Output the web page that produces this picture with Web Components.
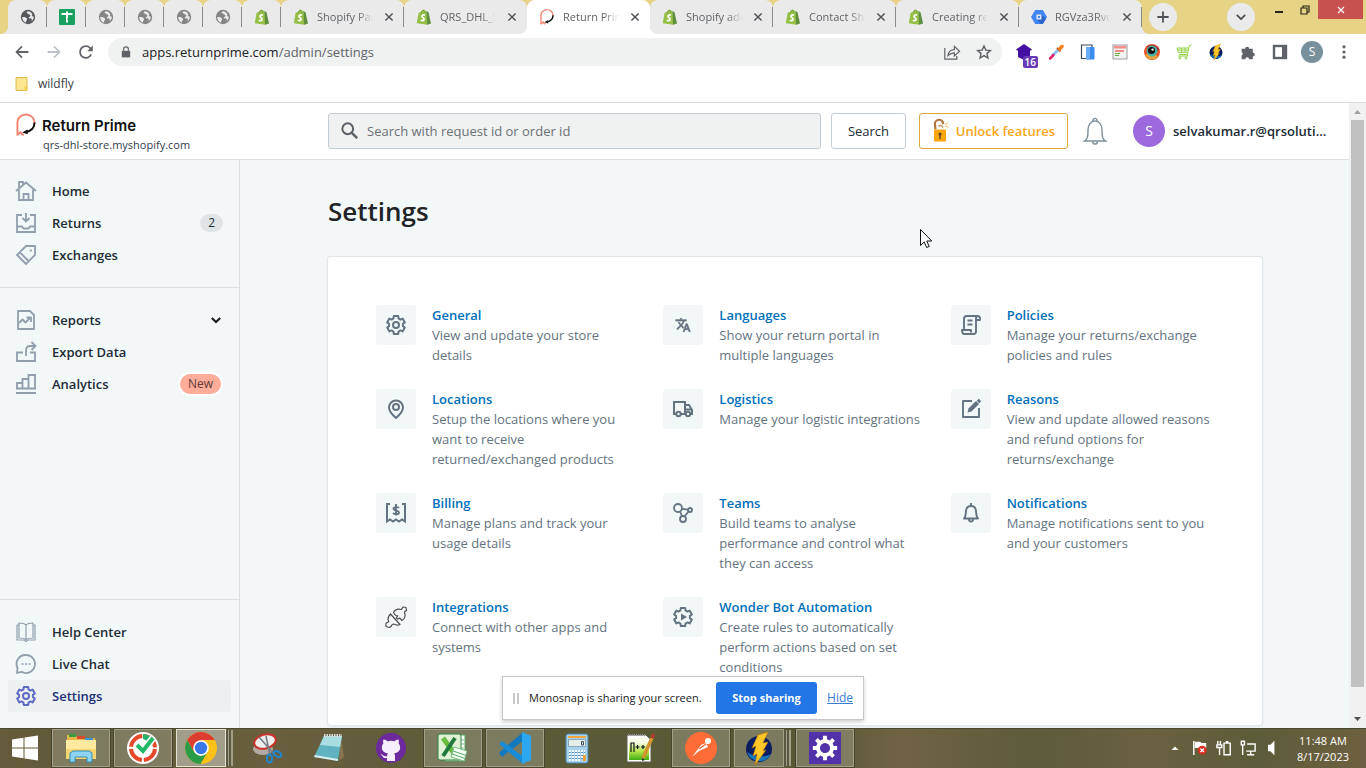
<!DOCTYPE html>
<html lang="en">
<head>
<meta charset="utf-8">
<title>Return Prime</title>
<style>
  html, body { height: 100%; }
  body {
    margin: 0;
    overflow: hidden;
    font: 13px/20px "Open Sans", "Noto Sans", sans-serif;
    color: #212b36;
  }
</style>
</head>
<body>
<desktop-shell>
  <tab-strip slot="browser">
    <browser-tab icon="globe-dark" pinned sep></browser-tab>
    <browser-tab icon="sheets" pinned sep></browser-tab>
    <browser-tab icon="globe" pinned sep></browser-tab>
    <browser-tab icon="globe" pinned sep></browser-tab>
    <browser-tab icon="globe" pinned sep></browser-tab>
    <browser-tab icon="globe" pinned sep></browser-tab>
    <browser-tab icon="shopify" pinned sep></browser-tab>
    <browser-tab icon="shopify" sep>Shopify Partners</browser-tab>
    <browser-tab icon="shopify">QRS_DHL_Store</browser-tab>
    <browser-tab icon="prime" active>Return Prime</browser-tab>
    <browser-tab icon="shopify" sep>Shopify admin</browser-tab>
    <browser-tab icon="shopify" sep>Contact Shopify</browser-tab>
    <browser-tab icon="shopify" sep>Creating returns</browser-tab>
    <browser-tab icon="gcloud" sep>RGVza3RvcA</browser-tab>
  </tab-strip>
  <address-bar slot="browser"></address-bar>
  <bookmark-bar slot="browser"></bookmark-bar>

  <app-header slot="header"></app-header>

  <side-nav slot="nav">
    <nav-item icon="home">Home</nav-item>
    <nav-item icon="returns">Returns<count-badge slot="end">2</count-badge></nav-item>
    <nav-item icon="tag">Exchanges</nav-item>
    <nav-item slot="middle" icon="report">Reports<svg-icon slot="end" name="chevron"></svg-icon></nav-item>
    <nav-item slot="middle" icon="export">Export Data</nav-item>
    <nav-item slot="middle" icon="bars">Analytics<count-badge slot="end" kind="new">New</count-badge></nav-item>
    <nav-item slot="bottom" icon="book">Help Center</nav-item>
    <nav-item slot="bottom" icon="chat">Live Chat</nav-item>
    <nav-item slot="bottom" icon="gear" selected>Settings</nav-item>
  </side-nav>

  <settings-page heading="Settings">
    <setting-item icon="gear" heading="General">View and update your store details</setting-item>
    <setting-item icon="translate" heading="Languages">Show your return portal in multiple languages</setting-item>
    <setting-item icon="scroll" heading="Policies">Manage your returns/exchange policies and rules</setting-item>
    <setting-item icon="pin" heading="Locations">Setup the locations where you want to receive returned/exchanged products</setting-item>
    <setting-item icon="truck" heading="Logistics">Manage your logistic integrations</setting-item>
    <setting-item icon="edit" heading="Reasons">View and update allowed reasons and refund options for returns/exchange</setting-item>
    <setting-item icon="bill" heading="Billing">Manage plans and track your usage details</setting-item>
    <setting-item icon="nodes" heading="Teams">Build teams to analyse performance and control what they can access</setting-item>
    <setting-item icon="bell" heading="Notifications">Manage notifications sent to you and your customers</setting-item>
    <setting-item icon="plug" heading="Integrations">Connect with other apps and systems</setting-item>
    <setting-item icon="gear-play" heading="Wonder Bot Automation">Create rules to automatically perform actions based on set conditions</setting-item>
  </settings-page>

  <share-bar slot="overlay"></share-bar>
  <mouse-pointer slot="overlay"></mouse-pointer>

  <task-bar slot="taskbar">
    <task-button icon="explorer" label="File Explorer" open></task-button>
    <task-button icon="timer" label="Time tracker" open></task-button>
    <task-button icon="chrome" label="Chrome" open stacked current></task-button>
    <task-button icon="snip" label="Snipping Tool"></task-button>
    <task-button icon="notepad" label="Notepad"></task-button>
    <task-button icon="github" label="GitHub"></task-button>
    <task-button icon="excel" label="Excel" open></task-button>
    <task-button icon="vscode" label="VS Code" open></task-button>
    <task-button icon="calc" label="Calculator"></task-button>
    <task-button icon="npp" label="Notepad++"></task-button>
    <task-button icon="postman" label="Postman" open></task-button>
    <task-button icon="bolt" label="Monosnap" open stacked></task-button>
    <task-button icon="settings-app" label="Settings" open></task-button>
  </task-bar>
</desktop-shell>

<script>
// Outline of a toothed cog centred in a 20x20 box
function cog(teeth, outer, inner, spread = 14, root = 21) {
  const pt = (deg, r) => {
    const a = (deg - 90) * Math.PI / 180;
    return (10 + r * Math.cos(a)).toFixed(2) + ' ' + (10 + r * Math.sin(a)).toFixed(2);
  };
  const pts = [];
  for (let i = 0; i < teeth; i++) {
    const c = i * 360 / teeth;
    pts.push(pt(c - root, inner), pt(c - spread, outer), pt(c + spread, outer), pt(c + root, inner));
  }
  return 'M' + pts.join('L') + 'Z';
}

const line = (body, w = 2, box = '0 0 20 20') =>
  `<svg viewBox="${box}" fill="none" stroke="currentColor" stroke-width="${w}" stroke-linejoin="round">${body}</svg>`;
const fill = (body, box = '0 0 20 20') => `<svg viewBox="${box}" fill="currentColor">${body}</svg>`;

const globe = color => `<svg viewBox="0 0 16 16"><circle cx="8" cy="8" r="7.2" fill="${color}"/>
  <path fill="#eaeaea" d="M2.2 8.3c1.8-.6 3.6.1 4.6 1.2.6.8.2 1.7-.6 2.4l-.5 1.9C3.5 12.8 2.2 10.8 2.2 8.3zM8 2.2c-2 .6-1.6 2.4.2 2.4.2 1.6 2.2.6 2.2 2.2 0 1.2-1.6 1-1.6 2.2 0 .8 1.4.4 2.6.8.8.3.6 1.6-.4 2.8 2-1.2 2.8-3 2.8-4.8l-2-.8.6-1.6C11.4 3.4 9.8 2.2 8 2.2z"/></svg>`;

const primeMark = `<path fill="none" stroke="#f4836f" stroke-width="2" d="M1.5 23V9.5C1.5 4.5 5.5 1 10.5 1s9 3.7 9 9"/>
  <path fill="none" stroke="#f4836f" stroke-width="2" d="M1.5 22.5l3.2-3 1.8 2.6 2-.2"/>
  <path fill="none" stroke="#111" stroke-width="2.2" d="M19.5 9.5c0 5.4-3.8 9.2-9.5 10"/>
  <path fill="#111" d="M12 16.8l-5.5 3 5.9 1.9z"/>`;

const bolt = `<circle cx="16" cy="17" r="13" fill="#0a1d62"/><path d="M4 20a13 13 0 0 0 24 2c-7 4-17 3-24-2z" fill="#1674b8"/>
  <path d="M15 3L25 0l-5 11 5-1-5 9 3-1-11 15 2-11-4 2 3-10-4 2z" fill="#ffc629" stroke="#b87a08" stroke-width=".6"/>`;

const ICONS = {
  'globe': globe('#858585'),
  'globe-dark': globe('#555a5e'),
  'sheets': `<svg viewBox="0 0 16 16"><rect width="16" height="16" rx="1" fill="#18a15f"/><path d="M2.5 5h11M8 2.5v11" stroke="#fff" stroke-width="2"/><path d="M8 10h5.5" stroke="#18a15f"/></svg>`,
  'shopify': `<svg viewBox="0 0 16 16"><path fill="#95bf47" d="M2.6 3.8L5 3.1C5.5 1.2 6.7.3 8 .4l1 1.3 1.5.3 1.2 13.8L.8 14.3z"/><path fill="#5e8e3e" d="M10.5 2l2 1.3L15 14.6l-3.9 1.2z"/>
    <path fill="none" stroke="#6f9a3a" stroke-width=".8" d="M5.2 4.2C5.5 2 6.8 1 7.8 1.3s1 1.3 1 2.2"/>
    <path fill="none" stroke="#fff" stroke-width="1.7" d="M9 6.3C7.5 5.4 5.8 6 6 7.4c.1 1.2 2.2 1.3 2.1 2.9-.1 1.5-1.9 1.8-3.3.8"/></svg>`,
  'prime': `<svg viewBox="0 0 21 24">${primeMark}</svg>`,
  'gcloud': `<svg viewBox="0 0 16 16"><path fill="#4285f4" d="M4.2 1h7.6L16 8l-4.2 7H4.2L0 8z"/><path fill="#2a66c8" d="M10.5 5.5L15 9.8 12 14.6 9.8 15l-4.3-4.5z"/><path fill="#dce8ff" d="M5.5 5.5h5v5h-5z"/><path fill="#4285f4" d="M7 7h2v2H7z"/></svg>`,
  'close': line('<path d="M4 4l12 12M16 4L4 16"/>', 2.4),
  'plus': line('<path d="M10 2v16M2 10h16"/>', 2.6),
  'caret': line('<path d="M4 7l6 6 6-6"/>', 2.6),
  'back': line('<path d="M18 10H3M10 3l-7 7 7 7"/>', 2.2),
  'forward': line('<path d="M2 10h15M10 3l7 7-7 7"/>', 2.2),
  'reload': line('<path d="M16.5 13A7.3 7.3 0 1 1 15 4.8l2 2.2"/><path fill="currentColor" stroke="none" d="M18.5 2v7h-7z"/>', 2.2),
  'lock': fill('<path d="M3 8h14v11H3z"/><path fill="none" stroke="currentColor" stroke-width="2" d="M6 8V5.5a4 4 0 0 1 8 0V8"/>'),
  'share': line('<path stroke-linejoin="miter" d="M1 5v14h15v-4M5 14.5C5.5 10 8.5 7 13 7V3l6.5 6L13 15v-4c-3 0-5.5.8-8 3.5z"/>', 1.5),
  'star': line('<path stroke-linejoin="miter" d="M10 2.5l2.3 5.2 5.6.5-4.2 3.8 1.2 5.5L10 14.6l-4.9 2.9 1.2-5.5-4.2-3.8 5.6-.5z"/>', 1.8),
  'cap': `<svg viewBox="0 0 16 16"><path fill="#4511a5" d="M8 0l8 5.5-2 1.5v6l-6 3-6-3V7L0 5.5z"/></svg>`,
  'dropper': `<svg viewBox="0 0 16 16"><path d="M4 12l6-6" stroke="#8ac4f5" stroke-width="3"/><path d="M2 14.5l3.5-3.5" stroke="#e0246e" stroke-width="2.5" stroke-linecap="round"/><path d="M9 4l3.5 3.5" stroke="#b34a13" stroke-width="1.8"/><path d="M11.5 5L14 2.5" stroke="#f58220" stroke-width="3.6" stroke-linecap="round"/></svg>`,
  'devices': `<svg viewBox="0 0 16 16"><path d="M6 14.5H1.5V1H12v2" fill="none" stroke="#3c4a5c" stroke-width="1.2"/><rect x="6" y="3" width="8.5" height="12.5" rx="1" fill="#3b8cf0"/><rect x="6" y="3" width="4" height="12.5" fill="#68adff"/></svg>`,
  'reader': `<svg viewBox="0 0 16 16"><rect x="1" y="1" width="14" height="14" fill="#f3f3f3" stroke="#9b9b9b"/><path fill="#f4908a" d="M2 2h12v2.5H2z"/><path stroke="#ef6a62" stroke-width="1.5" d="M3 7h9"/><path stroke="#63a83c" d="M3 9.5h5M3 11.5h4"/></svg>`,
  'eye': `<svg viewBox="0 0 16 16"><circle cx="8" cy="8" r="8" fill="#e9552c"/><path d="M2.5 3A8 8 0 0 1 15.5 6l-7 2z" fill="#a13939"/><path d="M1 11a8 8 0 0 0 13 2l-5-5z" fill="#e8a43c"/><circle cx="8" cy="7" r="5.4" fill="#49b4ac"/><circle cx="7.5" cy="6.5" r="3.6" fill="#141414"/><circle cx="8.6" cy="5.6" r="1.2" fill="#eee"/></svg>`,
  'cart': `<svg viewBox="0 0 16 16" fill="none" stroke="#8ed043"><path d="M15.5 1L13.5 1.5l-2.3 9H3M1 4l1.5 4.5 9-.3M1 4h11.5M1.5 6h10.5M5 4l.8 4.5M9 4v4.5M11 10.5l1 1.5H2"/><circle cx="4" cy="14" r="1"/><circle cx="10" cy="14" r="1"/></svg>`,
  'bolt': `<svg viewBox="0 0 32 32">${bolt}</svg>`,
  'puzzle': fill('<path d="M2 6h4.5a2.5 2.5 0 1 1 5 0H16v4.5a2.5 2.5 0 1 1 0 5V19h-4.5a2.5 2.5 0 0 0-5 0H2v-4.5a2.5 2.5 0 0 0 0-4.5z"/>'),
  'panel': fill('<path d="M1 1h18v18H1z"/><path fill="#fff" d="M4 4h8.5v12H4z"/>'),
  'more': fill('<circle cx="10" cy="3.5" r="2"/><circle cx="10" cy="10" r="2"/><circle cx="10" cy="16.5" r="2"/>'),
  'folder': `<svg viewBox="0 0 14 16"><path fill="#ffe693" stroke="#e0bc46" d="M1 1.5h11v13H1z"/><path fill="#f7cf55" d="M9.5 10.5h3v4h-3z"/></svg>`,
  'search': line('<circle cx="7.5" cy="7.5" r="6"/><path d="M12 12l6 6" stroke-width="2.8"/>', 2.2),
  'unlock': `<svg viewBox="0 0 18 22"><path d="M3.5 9.5L3 5a4.2 4.2 0 0 1 8-2.5l.3 1.5" fill="none" stroke="#b37339" stroke-width="2.2"/><path d="M11 7.5c-1.5-2.5-3.5-2.5-4.5-1" fill="none" stroke="#d99b5d" stroke-width="1.5"/><path d="M13 4.5l3-1.5M13 6l3.5 1.5" stroke="#f2bd62"/><rect x="2" y="9.5" width="12" height="12" rx="1" fill="#fca410"/><circle cx="8" cy="14" r="1.6" fill="#5d4a29"/><path d="M7.3 14h1.5v5H7.3z" fill="#5d4a29"/></svg>`,
  'alarm': `<svg viewBox="0 0 24 28" fill="none" stroke="#7d8f9b" stroke-width="1.4"><path d="M1.5 24c3-2 3.5-4 3.5-11 0-5 2.8-9 7-9s7 4 7 9c0 7 .5 9 3.500 11z"/><path d="M10 4c-.5-3.5 4.500-3.500 4 0M9.500 24.500c.8 3.500 4.300 3.500 5 0"/></svg>`,
  'chevron': line('<path d="M4 7l6 6 6-6" stroke-linejoin="miter"/>', 3),

  'home': line('<path stroke-linejoin="miter" d="M0 10l10-8.5L20 10M3 8.5V19h14V8.5M3 7V1h4v2.5M7.5 19v-6h5v6"/>', 1.8),
  'returns': line('<path stroke-linejoin="miter" d="M6 2H1v17h18V2h-5M1 13.5h5l1.5 2h5l1.5-2h5M10 0v8M6.500 5l3.500 3.500L13.500 5"/>', 1.8),
  'tag': line('<path stroke-linejoin="miter" d="M10 1h9v9l-9 9-9-9zM4 7.5l8.5 8.5"/><path d="M14 5h1.5v1H14z" stroke-width="1"/>', 1.8),
  'report': line('<path d="M2 1h12l4 4v14H2z"/><path d="M3 13l3.5-3.5 3 3L14 8M10.500 7.500H15v4.500"/>', 1.8),
  'export': line('<path stroke-linejoin="miter" d="M7 10.5H1V19h18v-8.5h-5M10 14V9c0-3 1-5 4-5h5M15.5 0l4 4-4 4"/>', 1.8),
  'bars': line('<path stroke-linejoin="miter" d="M1 15V9h5.5v6M6.500 15V5H12.500v10M12.500 15V1H19v14M0 14.500h20M0 19h20"/>', 1.8),
  'book': line('<path d="M10 3C8 1 6 1 3 1v15c3 0 5 0 7 1.500 2-1.500 4-1.500 7-1.500V1c-3 0-5 0-7 2zM10 3v14"/><path d="M3 3H1v15h7l2 1.500 2-1.500h7V3h-2"/>', 1.2),
  'chat': line('<path d="M10 1a9 9 0 1 1-4.5 16.8L1 19l.5-5A9 9 0 0 1 10 1z"/><path d="M5.5 10h2M9 10h2M12.5 10h2" stroke-width="1.6"/>', 1.8),
  'gear': line(`<path d="${cog(6, 9.2, 7)}"/><circle cx="10" cy="10" r="3"/>`),
  'gear-play': line(`<path d="${cog(6, 9.2, 7)}"/><path fill="currentColor" stroke="none" d="M8 6.5l6 3.5-6 3.5z"/>`),
  'translate': `<svg viewBox="-3 -3 30 30" fill="currentColor" stroke="currentColor" stroke-width="1"><path d="M12.87 15.07l-2.54-2.51.03-.03c1.74-1.94 2.98-4.17 3.71-6.53H17V4h-7V2H8v2H1v1.99h11.17C11.5 7.92 10.44 9.75 9 11.35 8.07 10.32 7.3 9.19 6.69 8h-2c.73 1.63 1.73 3.17 2.98 4.56l-5.09 5.02L4 19l5-5 3.11 3.11zM18.5 10h-2L12 22h2l1.12-3h4.75L21 22h2zm-2.62 7l1.62-4.33L19.12 17z"/></svg>`,
  'scroll': line('<path d="M3 14V3.5A2.5 2.5 0 0 1 5.5 1h11M15 4.5V16.5a2.5 2.5 0 0 1-2.5 2.5H3.5C2 19 1 18 1 15h9v2.5M15 5h4V3.500C19 2 18 1 16.500 1S15 2 15 3.500zM6.500 5.500h5M6.500 9.500h5"/>', 1.9),
  'pin': line('<path d="M10 19c-4-3.5-7-6.5-7-10.5a7 7 0 0 1 14 0C17 12.5 14 15.5 10 19z"/><circle cx="10" cy="8" r="3"/>'),
  'truck': line('<path stroke-linejoin="miter" d="M3 15H1V3h11v12H8M12 6h4l3 5v4h-2M12 10.5h7"/><circle cx="5.5" cy="15" r="2.2"/><circle cx="15" cy="15" r="2.2"/>'),
  'edit': line('<path stroke-linejoin="round" d="M11 2H2v16h16V9"/><path d="M6.5 13.5l1-4 7.5-7.5 3 3-7.5 7.500z" fill="currentColor" stroke="none"/><path d="M17 3l2-2" stroke-width="3.4"/>', 1.9),
  'bill': line('<path stroke-linejoin="miter" d="M4 1H1v17.5l3-2 3 2 3-2 3 2 3-2 3 2V1h-3"/><path d="M13 5c-1-1.3-5.5-1.3-5.5.8S13 7.3 13 9.500s-4.500 2-6 .5M10 1v11.500" stroke-width="1.9"/>'),
  'nodes': line('<circle cx="5" cy="5" r="4"/><circle cx="17" cy="7" r="2"/><circle cx="10" cy="16" r="3"/><path d="M9 5.8l6 .9M7 8.5l2 4.5M15.5 8.5l-4 5"/>', 1.8),
  'bell': line('<path d="M3 15.5c2-1.5 1.5-3.5 2-7.5.3-3 2-5 5-5s4.7 2 5 5c.5 4 0 6 2 7.500zM10 0v3M8 16c0 3.500 4 3.500 4 0"/>', 1.9),
  'plug': `<svg viewBox="0 0 20 20" fill="none" stroke="#4a4f54" stroke-width="1.2" stroke-linejoin="round"><path d="M4.5 7l9.5 10.5c-2 1-4.5.5-6.5-.5-1.5.5-2 1-2.3 2.200L3.500 20.500 0 19.500v-3.300l2.700-1.400C1.500 12 2.500 9 4.500 7z"/><path d="M7.500 5.500C9 2.500 12 1.500 15.500 2.500L17 0l3 .5.500 2.800-2 1.700c1 3.500.5 7-2.500 8.500l-2.300-2.500-2 1.200-1.400-1.400 1.400-2-2-.3z"/></svg>`,

  'start': `<svg viewBox="0 0 28 26" fill="#fff"><path d="M1 4.5l11.5-1.7V12.5H1zM13.5 2.6L27 .6v11.900H13.500zM1 13.500h11.500v9.700L1 21.500zM13.500 13.500H27v11.900l-13.500-2z"/></svg>`,
  'explorer': `<svg viewBox="0 0 32 32"><path fill="#e3b94a" d="M2 3h9l1 3h18v21H2z"/><path fill="#3c9a40" d="M4 2h7v3H4z"/><path fill="#d64a2d" d="M12 4h8v3h-8z"/><path fill="#3f92d4" d="M20 6h8v3h-8z"/><path fill="#ffeaa0" d="M1 8h30v19H1z"/><path fill="#f6d672" d="M1 17h30v10H1z"/><path fill="#8ed4f0" stroke="#328fb5" d="M5 30V21l3-2h16l3 2v9h-5v-5H10v5z"/></svg>`,
  'timer': `<svg viewBox="0 0 32 32"><circle cx="16" cy="16" r="16" fill="#fff"/><circle cx="16" cy="16" r="12" fill="none" stroke="#e4492b" stroke-width="4" stroke-dasharray="16.8 2" transform="rotate(5 16 16)"/><path d="M16 2a14 14 0 0 1 10 5l-3 3-7-3z" fill="#27b36a"/><path d="M10 13l6 6L26 6" fill="none" stroke="#fff" stroke-width="7"/><path d="M10 13l6 6L26 6" fill="none" stroke="#22b865" stroke-width="4"/></svg>`,
  'chrome': `<svg viewBox="0 0 32 32"><circle cx="16" cy="16" r="16" fill="#fbc116"/><path fill="#dd3d31" d="M2.2 8A16 16 0 0 1 29.800 8H16l-7 12z"/><path fill="#2a9c48" d="M2.2 8A16 16 0 0 0 15.500 32L22.500 20 16 24l-7-4z"/><circle cx="16" cy="16" r="7.8" fill="#fff"/><circle cx="16" cy="16" r="6.2" fill="#3b78e7"/></svg>`,
  'snip': `<svg viewBox="0 0 32 32"><ellipse cx="12" cy="17" rx="10" ry="6" fill="#b3aaa3"/><ellipse cx="14" cy="9.5" rx="11" ry="7" fill="#eee" stroke="#c9322b" stroke-width="2" transform="rotate(-15 14 9.5)"/><path d="M8 5l15 17M15 4l4 20" stroke="#767f86" stroke-width="1.6"/><ellipse cx="18.5" cy="26.5" rx="2.5" ry="4" fill="none" stroke="#2286cf" stroke-width="2"/><ellipse cx="26.5" cy="22" rx="4" ry="2.5" fill="none" stroke="#2286cf" stroke-width="2" transform="rotate(30 26.5 22)"/></svg>`,
  'notepad': `<svg viewBox="0 0 32 32"><path fill="#8a7350" d="M28 5l3 20-5 4z"/><path fill="#5fb2bf" d="M11 4h18l-4 25L1 25z"/><path fill="#a8dde2" d="M11 4h18l-2 11-20-2z"/><path fill="#d9eef0" d="M25 29L1 25l1-2 23 4z"/><path stroke="#ddd" stroke-width="3" stroke-dasharray="1.5 1" d="M11 3.5h18"/></svg>`,
  'github': `<svg viewBox="0 0 32 32"><circle cx="16" cy="16" r="15" fill="#6c2a9d"/><path fill="#f4effa" d="M8.5 7.5c2 0 3 1 4 1.7a14 14 0 0 1 7 0c1-.7 2-1.7 4-1.7.6 1.500.4 2.800.1 3.800C27 16 24.500 21 19 21.500c1 1 1 2 1 3v4.500h-8v-3c-3.500.8-4.500-1.500-5-2.500l-1.500-1.300c2.500-.4 2.500 2.800 6.500 2 0-1 .3-2 1-2.700C7.500 21 5 16 8.400 11.300c-.3-1-.5-2.300.1-3.800z"/></svg>`,
  'excel': `<svg viewBox="0 0 32 32"><path fill="#fff" stroke="#57a35b" d="M8 3h20v26H8z"/><path stroke="#7fbf80" d="M18 8h9M18 12h9M18 16h9M18 20h9M18 24h9M22 5v22"/><rect x="1" y="2" width="23" height="26" rx="2" fill="#dff0d5" stroke="#2f8642"/><path d="M6 6l13 18" stroke="#6aba3e" stroke-width="5"/><path d="M18 6L6 24" stroke="#1f7a3b" stroke-width="4"/><path fill="#f6fff4" stroke="#77b884" d="M17 15l13 4-3 10-13-4z"/><path stroke="#5bae6b" d="M16 19l12 4M15 22l12 4"/></svg>`,
  'vscode': `<svg viewBox="0 0 32 32"><path fill="#1279be" d="M23 1L2 19l-2 2 3 4L25 8z"/><path fill="#1a8bd8" d="M23 31L0 12l3-3 22 16z"/><path fill="#2ba6f0" d="M23 0l9 4v24l-9 4z"/></svg>`,
  'calc': `<svg viewBox="0 0 32 32"><rect x="5" y="2" width="22" height="29" rx="2" fill="#a9d2ec" stroke="#4585ad"/><path fill="#f0a83c" d="M7 4h18v2H7z"/><path fill="#e4efe9" stroke="#8ba6b5" d="M7.5 7.5h17v7h-17z"/><path d="M20.5 9.5v3.500h2V9.500z" fill="none" stroke="#3d4f67"/><path stroke="#f2f8fc" stroke-width="2" stroke-dasharray="2 1" d="M8 19h16M8 22h16M8 25h16M8 28h12"/><path stroke="#5f8fb2" stroke-width="1" stroke-dasharray="2 1" d="M8 20.500h16M8 23.500h16M8 26.500h16"/><path fill="#eda43a" d="M22 23h3v6h-3z"/></svg>`,
  'npp': `<svg viewBox="0 0 32 32"><defs><linearGradient id="leaf" x1="0" y1="0" x2="0" y2="1"><stop offset=".2" stop-color="#f7fbe8"/><stop offset=".6" stop-color="#b6e64a"/><stop offset="1" stop-color="#3fae12"/></linearGradient></defs><path fill="#fff" stroke="#5a5f50" d="M4 3h19l5 5v22H4z"/><path fill="url(#leaf)" d="M6 6h16l4 4v18H6z"/><path stroke="#999" stroke-dasharray="1 1" stroke-width="2" d="M5 3h18"/><path fill="none" stroke="#111" stroke-width="1.2" d="M8 20v-9h3v9M12.5 15h4M14.5 13v4M18 15h4M20 13v4"/><path d="M20 26L29 6" stroke="#d3932e" stroke-width="3.5"/><path d="M19 29l3-1-3-2z" fill="#333"/><path d="M29 6l1.500-4" stroke="#b33d2c" stroke-width="3.5"/></svg>`,
  'postman': `<svg viewBox="0 0 32 32"><circle cx="16" cy="16" r="16" fill="#ff6c37"/><path fill="#fff" d="M7 25l9-12 5-2 2 4-9 4z"/><path stroke="#ff6c37" stroke-width="1.5" d="M14 17l7-5"/><circle cx="23" cy="9" r="3" fill="#fff"/></svg>`,
  'settings-app': `<svg viewBox="0 0 30 30"><path fill="#5232a8" d="M0 0h30v30H0z"/><g transform="translate(3 3) scale(1.2)"><path d="${cog(8, 9.6, 7, 9, 13)}" fill="#fff"/><circle cx="10" cy="10" r="4" fill="#5232a8"/></g></svg>`,
  'tray-up': fill('<path fill="#fff" d="M3 14l7-7 7 7z"/>'),
  'tray-flag': `<svg viewBox="0 0 18 18"><path d="M2 1v16" stroke="#fff" stroke-width="1.6"/><path fill="#fff" d="M3 2h6l2 1.5h5V9H3z"/><circle cx="11.5" cy="11.5" r="5" fill="#d92c20"/><path d="M9.5 9.5l4 4M13.5 9.5l-4 4" stroke="#fff" stroke-width="1.5"/></svg>`,
  'tray-battery': `<svg viewBox="0 0 18 18" fill="none" stroke="#fff" stroke-width="1.6"><path d="M9 3.5h7v13H9zM11 2h3M2 1v4M5 1v4M1 5.5h5.5v3H1zM4 9v8"/></svg>`,
  'tray-net': `<svg viewBox="0 0 18 18" fill="none" stroke="#fff" stroke-width="1.6"><path d="M8 4.5h9v8H7M12 13v3M8 16.5h8M1.5 1.5H5v4H1.5zM3 6v11"/></svg>`,
  'tray-sound': fill('<path fill="#fff" d="M5 6h3l5-5v18l-5-5H5z"/>'),
  'minimize': line('<path d="M2 14h16" />', 4),
  'restore': line('<path stroke-linejoin="miter" d="M2 6h12v12H2zM6 5V2h12v12h-3"/>', 2.4)
};

// Small base class: every element renders its own shadow root once
class Base extends HTMLElement {
  connectedCallback() {
    if (this.shadowRoot) return;
    this.attachShadow({ mode: 'open' }).innerHTML = `<style>
      * { box-sizing: border-box; }
      button { font: inherit; color: inherit; padding: 0; border: 0; background: none; }
      a { text-decoration: none; color: inherit; }
      ${this.styles()}</style>${this.markup()}`;
  }
  styles() { return ''; }
  markup() { return '<slot></slot>'; }
  attr(name) { return this.getAttribute(name) || ''; }
}

class SvgIcon extends Base {
  styles() {
    return `
      :host { display: inline-block; width: 20px; height: 20px; flex: none; }
      svg { display: block; width: 100%; height: 100%; overflow: visible; }`;
  }
  markup() { return ICONS[this.attr('name')] || ''; }
}

class DesktopShell extends Base {
  styles() {
    return `
      :host { display: flex; flex-direction: column; height: 100vh; position: relative; }
      .browser { flex: none; border-bottom: 1px solid #dadce0; }
      .viewport { flex: 1; min-height: 0; display: flex; }
      .app { flex: 1; min-width: 0; display: flex; flex-direction: column; background: #f2f7f7; }
      .body { flex: 1; min-height: 0; display: flex; }
      .scroll { width: 17px; background: #f1f1f1; display: flex; flex-direction: column; align-items: center; }
      .scroll svg { width: 17px; height: 17px; flex: none; }
      .track { flex: 1; width: 13px; }
      .thumb { height: 96%; background: #c1c1c1; }`;
  }
  markup() {
    return `
      <div class="browser"><slot name="browser"></slot></div>
      <div class="viewport">
        <div class="app">
          <slot name="header"></slot>
          <div class="body"><slot name="nav"></slot><slot></slot></div>
        </div>
        <div class="scroll">
          <svg viewBox="0 0 17 17"><path fill="#a3a3a3" d="M5 11l3.500-4 3.500 4z"/></svg>
          <div class="track"><div class="thumb"></div></div>
          <svg viewBox="0 0 17 17"><path fill="#505050" d="M5 6l3.500 4L12 6z"/></svg>
        </div>
      </div>
      <slot name="taskbar"></slot>
      <slot name="overlay"></slot>`;
  }
}

class TabStrip extends Base {
  styles() {
    return `
      :host { display: flex; height: 34px; padding-left: 8px; background: #e6d385; color: #5f6368; }
      .round { width: 28px; height: 28px; margin: 3px 0 0 7px; border-radius: 50%; background: #eaeaea; display: grid; place-items: center; color: #4d5156; }
      .round svg-icon { width: 14px; height: 14px; }
      .space { flex: 1; }
      .controls { display: flex; margin: 0 3px 0 11px; color: #2b2617; }
      .controls button { width: 26px; height: 19px; display: grid; place-items: center; }
      .controls svg-icon { width: 10px; height: 10px; }
      .controls .close { width: 45px; background: #c75050; color: #fff; }`;
  }
  markup() {
    return `<slot></slot>
      <button class="round" aria-label="New tab"><svg-icon name="plus"></svg-icon></button>
      <div class="space"></div>
      <button class="round" aria-label="Search tabs"><svg-icon name="caret"></svg-icon></button>
      <div class="controls">
        <button aria-label="Minimize"><svg-icon name="minimize"></svg-icon></button>
        <button aria-label="Restore"><svg-icon name="restore"></svg-icon></button>
        <button class="close" aria-label="Close"><svg-icon name="close"></svg-icon></button>
      </div>`;
  }
}

class BrowserTab extends Base {
  styles() {
    return `
      :host {
        --tab: #eaeaea;
        display: flex; align-items: center; gap: 7px; position: relative; flex: 0 1 123px; min-width: 0;
        padding: 0 9px 0 12px; border-radius: 8px 8px 0 0; background: var(--tab); font-size: 12px;
        box-sizing: border-box;
      }
      :host([active]) { --tab: #fff; z-index: 1; }
      :host([pinned]) { flex: 0 0 39px; }
      :host::before, :host::after { content: ''; position: absolute; bottom: 0; width: 8px; height: 8px; }
      :host::before { left: -8px; background: radial-gradient(circle at 0 0, transparent 8px, var(--tab) 8px); }
      :host::after { right: -8px; background: radial-gradient(circle at 100% 0, transparent 8px, var(--tab) 8px); }
      svg-icon { width: 16px; height: 16px; }
      .title { flex: 1; min-width: 0; padding-left: 1px; overflow: hidden; white-space: nowrap; font-size: 11px; mask-image: linear-gradient(90deg, #000 70%, transparent 95%); }
      button { width: 12px; height: 12px; color: #4d5156; }
      button svg-icon { width: 12px; height: 12px; display: block; }
      .sep { position: absolute; right: 0; top: 7px; width: 1px; height: 20px; background: #8b8b87; z-index: 1; }`;
  }
  markup() {
    const rest = this.hasAttribute('pinned') ? '' :
      '<span class="title"><slot></slot></span><button aria-label="Close tab"><svg-icon name="close"></svg-icon></button>';
    const sep = this.hasAttribute('sep') ? '<span class="sep"></span>' : '';
    return `<svg-icon name="${this.attr('icon')}"></svg-icon>${rest}${sep}`;
  }
}

class AddressBar extends Base {
  styles() {
    return `
      :host { display: flex; align-items: center; height: 36px; padding: 0 6px; background: #fff; color: #5f6368; }
      button { width: 32px; height: 32px; display: grid; place-items: center; position: relative; flex: none; }
      button svg-icon { width: 16px; height: 16px; }
      .dim { color: #bdc1c6; }
      .omni { flex: 1; display: flex; align-items: center; height: 28px; margin: 0 6px; padding: 0 2px 0 12px; border-radius: 14px; background: #f0f2f1; }
      .omni > svg-icon { width: 12px; height: 12px; }
      .omni .url { flex: 1; padding-left: 10px; }
      b { font-weight: 400; color: #202124; }
      .ext { display: flex; }
      .count { position: absolute; right: 2px; bottom: 0; padding: 0 2px; border-radius: 2px; background: #673ab7; color: #fff; font: 600 10px/12px "Open Sans", sans-serif; }
      .avatar { width: 22px; height: 22px; border-radius: 50%; background: #78909c; color: #fff; font-size: 12px; line-height: 22px; text-align: center; }`;
  }
  markup() {
    const ext = ['dropper', 'devices', 'reader', 'eye', 'cart', 'bolt', 'puzzle', 'panel'];
    return `
      <button aria-label="Back"><svg-icon name="back"></svg-icon></button>
      <button class="dim" aria-label="Forward"><svg-icon name="forward"></svg-icon></button>
      <button aria-label="Reload"><svg-icon name="reload"></svg-icon></button>
      <div class="omni">
        <svg-icon name="lock"></svg-icon>
        <span class="url"><b>apps.returnprime.com</b>/admin/settings</span>
        <button aria-label="Share"><svg-icon name="share"></svg-icon></button>
        <button aria-label="Bookmark"><svg-icon name="star"></svg-icon></button>
      </div>
      <div class="ext">
        <button aria-label="Extension"><svg-icon name="cap"></svg-icon><span class="count">16</span></button>
        ${ext.map(n => `<button aria-label="${n}"><svg-icon name="${n}"></svg-icon></button>`).join('')}
        <button aria-label="Profile"><span class="avatar">S</span></button>
        <button aria-label="Menu"><svg-icon name="more"></svg-icon></button>
      </div>`;
  }
}

class BookmarkBar extends Base {
  styles() {
    return `
      :host { display: flex; height: 32px; padding: 4px 15px 0; box-sizing: border-box; background: #fff; font-size: 12px; color: #3c4043; }
      a { display: flex; align-items: center; gap: 9px; height: 20px; }
      svg-icon { width: 14px; height: 16px; }`;
  }
  markup() { return '<a href="#"><svg-icon name="folder"></svg-icon>wildfly</a>'; }
}

class AppHeader extends Base {
  styles() {
    return `
      :host { display: flex; align-items: center; flex: none; height: 56px; padding-right: 23px; background: #fff; box-shadow: 0 1px 0 #dcdfe2; position: relative; z-index: 1; }
      .brand { flex: 0 0 328px; display: flex; gap: 6px; padding: 6px 0 0 16px; }
      .brand svg-icon { width: 20px; height: 24px; }
      .brand strong { display: block; padding-top: 4px; color: #111; font: 600 15px/18px Inter, sans-serif; }
      .brand small { display: block; padding-left: 1px; font-size: 11px; line-height: 20px; color: #33404d; }
      label { flex: 1; display: flex; align-items: center; gap: 8px; height: 36px; padding: 0 13px 0 12px; border: 1px solid #c1cdd2; border-radius: 3px; background: #f0f2f2; color: #5c6165; }
      label svg-icon { width: 18px; height: 18px; }
      input { flex: 1; min-width: 0; border: 0; padding: 0; outline: 0; background: none; font: inherit; color: inherit; }
      input::placeholder { color: #6b7175; }
      button { height: 36px; }
      .go { width: 75px; margin-left: 10px; border: 1px solid #c4cdd5; border-radius: 3px; background: #fff; }
      .unlock { display: flex; align-items: center; justify-content: center; gap: 6px; width: 149px; margin-left: 13px; border: 1px solid #dea83a; border-radius: 3px; color: #f9a51a; font-weight: 600; }
      .unlock svg-icon { width: 18px; height: 22px; }
      .alarm { margin: 0 26px 0 15px; display: grid; place-items: center; }
      .alarm svg-icon { width: 24px; height: 28px; }
      .user { display: flex; align-items: center; gap: 8px; font-weight: 600; }
      .user span:last-child { width: 153px; overflow: hidden; white-space: nowrap; }
      .avatar { width: 32px; height: 32px; border-radius: 50%; background: #9c6ade; color: #fff; font-size: 14px; font-weight: 400; line-height: 32px; text-align: center; }`;
  }
  markup() {
    return `
      <div class="brand">
        <svg-icon name="prime"></svg-icon>
        <div><strong>Return Prime</strong><small>qrs-dhl-store.myshopify.com</small></div>
      </div>
      <label><svg-icon name="search"></svg-icon><input type="text" aria-label="Search" placeholder="Search with request id or order id"></label>
      <button class="go">Search</button>
      <button class="unlock"><svg-icon name="unlock"></svg-icon>Unlock features</button>
      <button class="alarm" aria-label="Notifications"><svg-icon name="alarm"></svg-icon></button>
      <div class="user"><span class="avatar">S</span><span>selvakumar.r@qrsoluti...</span></div>`;
  }
}

class SideNav extends Base {
  styles() {
    return `
      :host { display: flex; flex-direction: column; flex: 0 0 240px; box-sizing: border-box; border-right: 1px solid #dcdfe2; }
      .group { padding: 16px 8px; }
      .line { border-top: 1px solid #dcdfe2; }
      .push { margin-top: auto; }`;
  }
  markup() {
    return `
      <nav class="group"><slot></slot></nav>
      <nav class="group line"><slot name="middle"></slot></nav>
      <nav class="group line push"><slot name="bottom"></slot></nav>`;
  }
}

class NavItem extends Base {
  styles() {
    return `
      :host { display: block; }
      a { display: flex; align-items: center; gap: 16px; height: 32px; padding: 0 8px; border-radius: 3px; font-weight: 600; }
      a > svg-icon { color: #919eab; }
      .text { flex: 1; }
      ::slotted(svg-icon) { width: 14px; height: 14px; color: #1a1f24; }
      :host([selected]) a { background: #ecf0f1; color: #202e78; }
      :host([selected]) a > svg-icon { color: #5c6ac4; }`;
  }
  markup() {
    return `<a href="#"><svg-icon name="${this.attr('icon')}"></svg-icon><span class="text"><slot></slot></span><slot name="end"></slot></a>`;
  }
}

class CountBadge extends Base {
  styles() {
    return `
      :host { padding: 0 8px; border-radius: 10px; background: #dfe5e7; font-size: 12px; line-height: 18px; font-weight: 400; }
      :host([kind=new]) { margin-right: 2px; border-radius: 12px; background: #fead9a; color: #5f3b35; line-height: 20px; box-shadow: 0 0 0 2px #fff; }`;
  }
}

class SettingsPage extends Base {
  styles() {
    return `
      :host { flex: 1; min-width: 0; display: block; overflow: hidden; padding: 32px 87px 0 88px; }
      h1 { margin: 0 0 26px; font-size: 26px; line-height: 40px; font-weight: 600; color: #212326; }
      .card { display: grid; grid-template-columns: repeat(3, 1fr); gap: 24px; padding: 48px; border-radius: 3px; background: #fff; box-shadow: 0 0 0 1px #e1e6ea, 0 1px 3px #d5dbe0; }`;
  }
  markup() {
    return `<main><h1>${this.attr('heading')}</h1><div class="card"><slot></slot></div></main>`;
  }
}

class SettingItem extends Base {
  styles() {
    return `
      :host { display: flex; gap: 16px; min-width: 0; color: #637381; }
      .tile { flex: none; width: 40px; height: 40px; display: grid; place-items: center; border-radius: 3px; background: #f2f7f7; }
      h2 { margin: 0; font-size: inherit; font-weight: 600; color: #006fbb; }
      p { margin: 0; }`;
  }
  markup() {
    return `<span class="tile"><svg-icon name="${this.attr('icon')}"></svg-icon></span>
      <div><h2><a href="#">${this.attr('heading')}</a></h2><p><slot></slot></p></div>`;
  }
}

class ShareBar extends Base {
  styles() {
    return `
      :host { position: absolute; left: 50%; bottom: 48px; transform: translateX(-50%); display: flex; align-items: center; box-sizing: border-box; width: 362px; height: 44px; padding: 0 10px; border: 1px solid #c6c6c6; background: #fff; box-shadow: 0 2px 4px #0003; font-size: 11px; color: #202124; white-space: nowrap; }
      .grip { width: 6px; height: 11px; border: solid #c8c8c8; border-width: 0 2px; }
      .text { flex: 1; padding-left: 10px; }
      button { width: 101px; height: 32px; border-radius: 3px; background: #2376e5; color: #fff; font-weight: 700; }
      a { margin-left: 10px; font-size: 12px; color: #3c7bd4; text-decoration: underline; }`;
  }
  markup() {
    return `<span class="grip"></span><span class="text">Monosnap is sharing your screen.</span><button>Stop sharing</button><a href="#">Hide</a>`;
  }
}

class MousePointer extends Base {
  styles() { return ':host { position: absolute; left: 920px; top: 229px; width: 13px; height: 20px; }'; }
  markup() {
    return '<svg width="13" height="20"><path fill="#fff" stroke="#111" d="M.5.5v16l3.7-3.5 2.5 5.5 2.5-1-2.4-5.5h5z"/></svg>';
  }
}

class TaskBar extends Base {
  styles() {
    return `
      :host { display: flex; flex: none; height: 40px; color: #fff; font-size: 11px; line-height: 16px;
        background: linear-gradient(90deg, #665b3a, #5c5a38 8%, #6a5f3e 20%, #5b5b38 34%, #5a5936 60%, #706343 66%, #5c5b3a 76%, #6b6141 84%, #5c5c39 92%, #6d6040); box-shadow: inset 0 1px 0 #4b4930; }
      .start { width: 50px; display: grid; place-items: center; }
      .start svg-icon { width: 28px; height: 26px; }
      .apps { flex: 1; display: flex; gap: 4px; padding: 1px 0 1px 2px; }
      .tray { display: flex; align-items: center; gap: 8px; }
      .tray svg-icon { width: 16px; height: 16px; }
      .tray svg-icon:first-child { width: 10px; height: 10px; margin-right: 4px; }
      time { padding: 5px 17px 0; text-align: center; }`;
  }
  markup() {
    return `
      <button class="start" aria-label="Start"><svg-icon name="start"></svg-icon></button>
      <div class="apps"><slot></slot></div>
      <div class="tray">
        <svg-icon name="tray-up"></svg-icon><svg-icon name="tray-flag"></svg-icon><svg-icon name="tray-battery"></svg-icon>
        <svg-icon name="tray-net"></svg-icon><svg-icon name="tray-sound"></svg-icon>
      </div>
      <time>11:48 AM<br>8/17/2023</time>`;
  }
}

class TaskButton extends Base {
  styles() {
    return `
      :host { display: block; flex: 0 0 58px; }
      button { width: 100%; height: 38px; display: grid; place-items: center; }
      svg-icon { width: 32px; height: 32px; }
      :host([open]) button { border: 1px solid #a3a089; background: #fff3; box-shadow: 0 0 0 1px #47452e; }
      :host([current]) button { background: #fff6; border-color: #e4e2d4; }
      :host([stacked]) button { width: 50px; box-shadow: 3px 0 0 -1px #5a5840, 4px 0 0 -1px #a3a089, 6px 0 0 -1px #5a5840, 8px 0 0 -1px #a3a089; }`;
  }
  markup() {
    return `<button aria-label="${this.attr('label')}"><svg-icon name="${this.attr('icon')}"></svg-icon></button>`;
  }
}

customElements.define('svg-icon', SvgIcon);
customElements.define('desktop-shell', DesktopShell);
customElements.define('tab-strip', TabStrip);
customElements.define('browser-tab', BrowserTab);
customElements.define('address-bar', AddressBar);
customElements.define('bookmark-bar', BookmarkBar);
customElements.define('app-header', AppHeader);
customElements.define('side-nav', SideNav);
customElements.define('nav-item', NavItem);
customElements.define('count-badge', CountBadge);
customElements.define('settings-page', SettingsPage);
customElements.define('setting-item', SettingItem);
customElements.define('share-bar', ShareBar);
customElements.define('mouse-pointer', MousePointer);
customElements.define('task-bar', TaskBar);
customElements.define('task-button', TaskButton);
</script>
</body>
</html>
